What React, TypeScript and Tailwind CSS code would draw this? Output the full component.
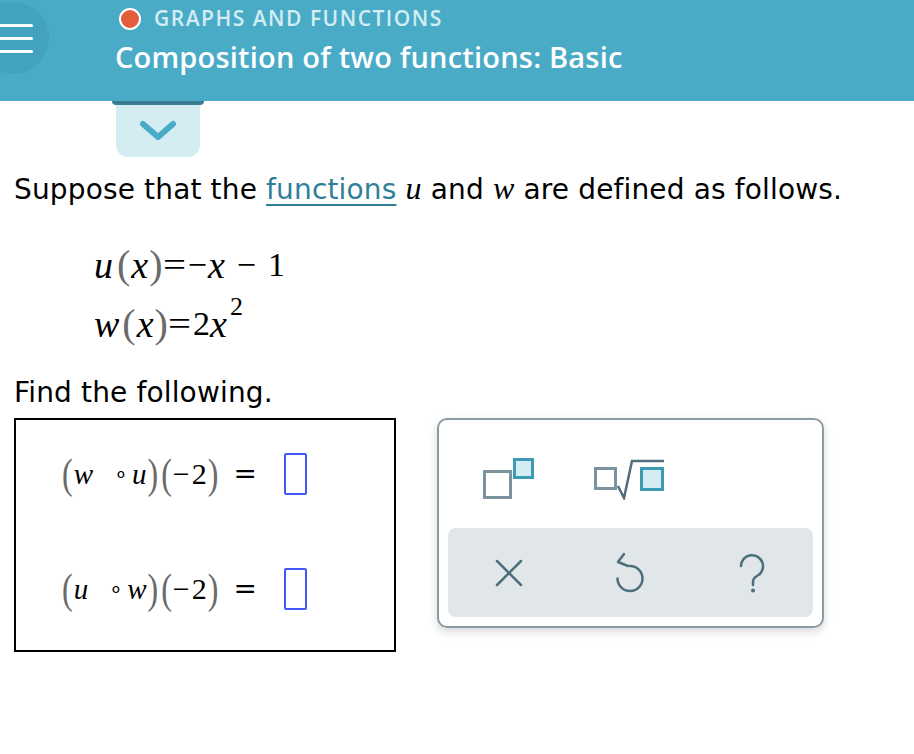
import React from "react";

const serif = { fontFamily: '"Liberation Serif", "Times New Roman", serif' };

const Paren = ({ c, cls = "" }: { c: string; cls?: string }) => (
  <span className={"text-[#6a6a6a] text-[32px] leading-none inline-block scale-y-[1.3] " + cls}>{c}</span>
);

const MathRow = ({ a, b }: { a: string; b: string }) => (
  <div className="flex items-center h-[42px]">
    <div className="flex items-center text-[28px] leading-none text-black" style={serif}>
      <Paren c="(" />
      <i className="ml-[1px] text-[29px]">{a}</i>
      <span className="ml-[21px] text-[22px]">∘</span>
      <i className="ml-[4px] text-[29px]">{b}</i>
      <Paren c=")" cls="ml-[1px]" />
      <Paren c="(" cls="ml-[3px]" />
      <span className="ml-[1px] text-[30px]">−</span>
      <span className="ml-[2px] text-[30px]">2</span>
      <Paren c=")" cls="ml-[1px]" />
      <span className="ml-[15px]" style={{ fontFamily: '"DejaVu Sans", sans-serif' }}>=</span>
    </div>
    <div className="ml-[27px] w-[23px] h-[42px] border-2 border-[#4357f2] rounded-[2px]" />
  </div>
);

export default function App() {
  const body = { fontFamily: '"DejaVu Sans", Verdana, sans-serif' };
  return (
    <div className="w-[914px] h-[754px] bg-white overflow-hidden relative" style={body}>
      {/* Header */}
      <div className="relative h-[101px] bg-[#4aabc7] overflow-hidden">
        <div className="absolute left-[-23px] top-[2px] w-[72px] h-[72px] rounded-full bg-[#43a2bd] flex flex-col justify-center items-end pr-[16px] gap-[10px]">
          <div className="w-[34px] h-[3px] bg-white rounded-full" />
          <div className="w-[34px] h-[3px] bg-white rounded-full" />
          <div className="w-[34px] h-[3px] bg-white rounded-full" />
        </div>
        <div className="pl-[115px] pt-[5px]" style={{ fontFamily: '"Open Sans", Lato, sans-serif' }}>
          <div className="flex items-center h-[28px]">
            <div className="ml-[4px] w-[22px] h-[22px] rounded-full bg-[#e45d3b] border-2 border-white" />
            <span className="ml-[13px] text-[21px] font-semibold text-[#d3edf3] tracking-[1.5px]">GRAPHS AND FUNCTIONS</span>
          </div>
          <div className="mt-[5px] text-[29px] font-semibold text-white leading-[38px] tracking-[0.2px]">
            Composition of two functions: Basic
          </div>
        </div>
      </div>

      {/* Tab */}
      <div className="ml-[112px] w-[92px] flex flex-col items-center">
        <div className="w-[92px] h-[4px] bg-[#387d91] rounded-b-[4px]" />
        <div className="w-[84px] h-[52px] bg-[#d3edf2] rounded-b-[12px] flex items-center justify-center">
          <svg width="40" height="26" viewBox="0 0 40 26">
            <path d="M5 6 L20 19 L35 6" fill="none" stroke="#4aabc7" strokeWidth="6" strokeLinecap="round" strokeLinejoin="round" />
          </svg>
        </div>
      </div>

      {/* Problem text */}
      <div className="pl-[14px] mt-[15px] text-[28px] leading-[32px] text-black whitespace-nowrap tracking-[0.15px]">
        Suppose that the{" "}
        <span className="text-[#2f7f99] underline underline-offset-[5px] decoration-[2px]">functions</span>{" "}
        <i style={serif} className="text-[32px]">u</i> and <i style={serif} className="text-[32px]">w</i> are defined as follows.
      </div>

      <div className="pl-[94px] mt-[39px] flex flex-col gap-[19px] text-[34px] leading-[40px]" style={serif}>
        <div className="flex items-center h-[40px]">
          <i className="text-[38px]">u</i>
          <span className="ml-[4px] text-[#6a6a6a] text-[40px]">(</span>
          <i className="ml-[1px] text-[38px]">x</i>
          <span className="ml-[1px] text-[#6a6a6a] text-[40px]">)</span>
          <span className="ml-[2px] inline-block scale-x-[1.2]">=</span>
          <span className="ml-[4px]">−</span>
          <i className="ml-[1px] text-[38px]">x</i>
          <span className="ml-[12px]">−</span>
          <span className="ml-[12px]">1</span>
        </div>
        <div className="flex items-center h-[40px]">
          <i className="text-[38px]">w</i>
          <span className="ml-[3px] text-[#6a6a6a] text-[40px]">(</span>
          <i className="ml-[1px] text-[38px]">x</i>
          <span className="ml-[1px] text-[#6a6a6a] text-[40px]">)</span>
          <span className="ml-[2px] inline-block scale-x-[1.2]">=</span>
          <span className="ml-[4px]">2</span>
          <i className="text-[38px]">x</i>
          <span className="text-[26px] ml-[3px] relative top-[-17px]">2</span>
        </div>
      </div>

      <div className="pl-[14px] mt-[33px] text-[28px] leading-[32px] text-black tracking-[0.15px]">Find the following.</div>

      {/* Answer area */}
      <div className="flex mt-[9px] pl-[14px] gap-[41px]">
        <div className="w-[382px] h-[234px] border-2 border-black pl-[46px] pt-[33px] flex flex-col gap-[73px]">
          <MathRow a="w" b="u" />
          <MathRow a="u" b="w" />
        </div>

        <div className="w-[387px] h-[210px] border-2 border-[#8a9ba5] rounded-[10px] shadow-[0_4px_10px_rgba(0,0,0,0.15)] p-[9px] flex flex-col">
          <div className="grid grid-cols-3 h-[99px] items-center">
            <div className="flex justify-center">
              <svg width="52" height="42" viewBox="0 0 52 42">
                <rect x="1.5" y="13.5" width="26" height="26" fill="none" stroke="#7b939e" strokeWidth="3" />
                <rect x="31.5" y="1.5" width="18" height="18" fill="#d3edf2" stroke="#3d9ab5" strokeWidth="3" />
              </svg>
            </div>
            <div className="flex justify-center">
              <svg width="72" height="42" viewBox="0 0 72 42">
                <rect x="1.5" y="10.5" width="20" height="20" fill="none" stroke="#7b939e" strokeWidth="3" />
                <path d="M24 28 L30 40 L38 3 L70 3" fill="none" stroke="#4f6f7c" strokeWidth="2.5" />
                <rect x="47.5" y="10.5" width="21" height="21" fill="#d3edf2" stroke="#3d9ab5" strokeWidth="3" />
              </svg>
            </div>
            <div />
          </div>
          <div className="flex-1 bg-[#e1e6e9] rounded-[8px] grid grid-cols-3 items-center">
            <div className="flex justify-center">
              <svg width="28" height="28" viewBox="0 0 28 28">
                <path d="M2 2 L26 26 M26 2 L2 26" stroke="#4d6e7c" strokeWidth="2.5" strokeLinecap="round" />
              </svg>
            </div>
            <div className="flex justify-center">
              <svg width="32" height="46" viewBox="0 0 32 46">
                <path d="M10 4 L4 12 L14 16" fill="none" stroke="#4d6e7c" strokeWidth="2.5" strokeLinecap="round" strokeLinejoin="round" />
                <path d="M16 16 A12.5 12.5 0 1 1 3.5 28.5" fill="none" stroke="#4d6e7c" strokeWidth="2.5" strokeLinecap="round" />
              </svg>
            </div>
            <div className="flex justify-center">
              <svg width="30" height="44" viewBox="0 0 30 44">
                <path d="M4 15 A11 11 0 1 1 20 25 Q16 27 16 31 L16 34" fill="none" stroke="#4d6e7c" strokeWidth="2.5" strokeLinecap="round" />
                <circle cx="16" cy="39.5" r="2" fill="#4d6e7c" />
              </svg>
            </div>
          </div>
        </div>
      </div>
    </div>
  );
}
